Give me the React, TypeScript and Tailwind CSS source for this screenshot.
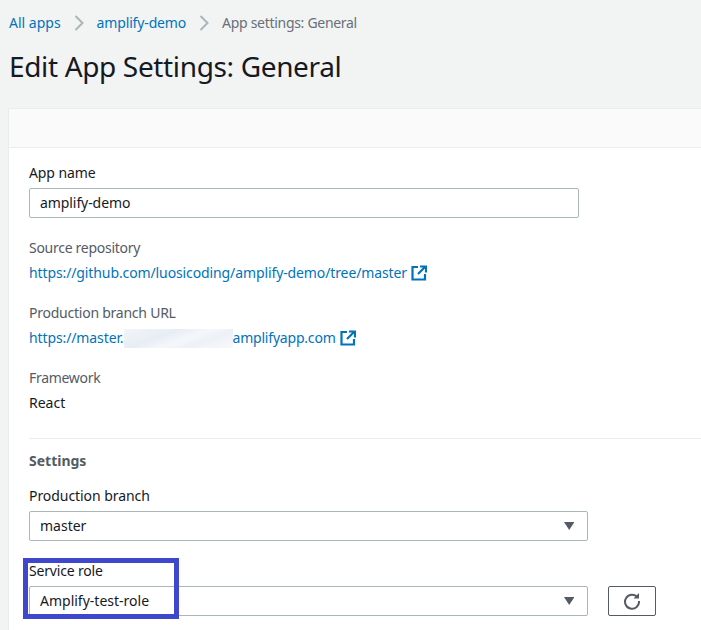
import React from "react";

function ExternalIcon() {
  return (
    <svg width="16" height="16" viewBox="0 0 16 16" fill="none" className="ml-[4px] shrink-0">
      <path d="M7 2H1.5v12.5H14V9" stroke="#0073bb" strokeWidth="2.2" />
      <path d="M9 1.5H15V7.5M14.5 1.5L7 9" stroke="#0073bb" strokeWidth="2.2" />
    </svg>
  );
}

function Caret() {
  return (
    <svg width="10" height="8" viewBox="0 0 10 8" className="shrink-0">
      <path d="M0 0h10.5L5.2 8z" fill="#545b64" />
    </svg>
  );
}

function Chevron() {
  return (
    <svg width="10" height="16" viewBox="0 0 10 16" fill="none" className="mx-[13px] shrink-0">
      <path d="M1.5 1l7 7-7 7" stroke="#aab7b8" strokeWidth="2" />
    </svg>
  );
}

function Select({ value }: { value: string }) {
  return (
    <div className="flex h-[30px] w-[559px] items-center justify-between rounded-[2px] border border-[#aab7b8] bg-white pl-[10px] pr-[13px] text-[14px] leading-[22px] text-[#16191f]">
      <span>{value}</span>
      <Caret />
    </div>
  );
}

export default function App() {
  return (
    <div className="relative flex h-[630px] w-[701px] flex-col overflow-hidden bg-[#f2f3f3] font-['Noto_Sans',sans-serif] text-[14px] leading-[22px] text-[#16191f]">
      <nav className="flex h-[46px] shrink-0 items-center pb-[1px] pl-[9px]">
        <span className="text-[#0073bb]">All apps</span>
        <Chevron />
        <span className="tracking-[-0.15px] text-[#0073bb]">amplify-demo</span>
        <Chevron />
        <span className="tracking-[-0.3px] text-[#687078]">App settings: General</span>
      </nav>
      <h1 className="shrink-0 pl-[9px] text-[28px] font-normal leading-[40px] tracking-[-0.35px]">Edit App Settings: General</h1>
      <section className="ml-[8px] mt-[22px] w-[720px] flex-1 border-l border-t border-[#eaeded] bg-white">
        <div className="h-[39px] border-b border-[#eaeded] bg-[#fafafa]" />
        <div className="pl-[20px] pt-[14px]">
          <div className="tracking-[-0.1px]">App name</div>
          <div className="mt-[4px] flex h-[30px] w-[550px] items-center rounded-[2px] border border-[#aab7b8] bg-white pl-[10px] tracking-[-0.08px]">amplify-demo</div>

          <div className="mt-[19px] tracking-[-0.28px] text-[#545b64]">Source repository</div>
          <div className="mt-[3px] flex items-center tracking-[-0.11px] text-[#0073bb]">
            https://github.com/luosicoding/amplify-demo/tree/master
            <ExternalIcon />
          </div>

          <div className="mt-[18px] tracking-[-0.24px] text-[#545b64]">Production branch URL</div>
          <div className="mt-[3px] flex items-center tracking-[-0.11px] text-[#0073bb]">
            https://master.
            <span className="h-[19px] w-[109px] bg-[linear-gradient(160deg,#f2f5f9,#e8edf5_35%,#f5f7fa_55%,#edf1f7_70%,#f8f9fb)]" />
            <span className="tracking-[-0.2px]">amplifyapp.com</span>
            <ExternalIcon />
          </div>

          <div className="mt-[18px] tracking-[-0.3px] text-[#545b64]">Framework</div>
          <div className="mt-[3px]">React</div>

          <div className="mt-[24px] border-t border-[#eaeded] pt-[11px] font-bold text-[#545b64]">Settings</div>

          <div className="mt-[13px] tracking-[-0.06px]">Production branch</div>
          <div className="mt-[4px]">
            <Select value="master" />
          </div>

          <div className="mt-[19px] tracking-[-0.18px]">Service role</div>
          <div className="mt-[4px] flex items-center gap-[20px]">
            <Select value="Amplify-test-role" />
            <button className="flex h-[30px] w-[48px] items-center justify-center rounded-[2px] border border-[#545b64] bg-white">
              <svg width="18" height="18" viewBox="0 0 18 18" fill="none">
                <path d="M14.6 5.5A7 7 0 1 0 16 9" stroke="#545b64" strokeWidth="2" />
                <path d="M10.5 6.5H16V1z" fill="#545b64" />
              </svg>
            </button>
          </div>
        </div>
      </section>
      <div className="absolute left-[23px] top-[558px] h-[61px] w-[156px] border-[5px] border-[#3f48cc]" />
    </div>
  );
}
